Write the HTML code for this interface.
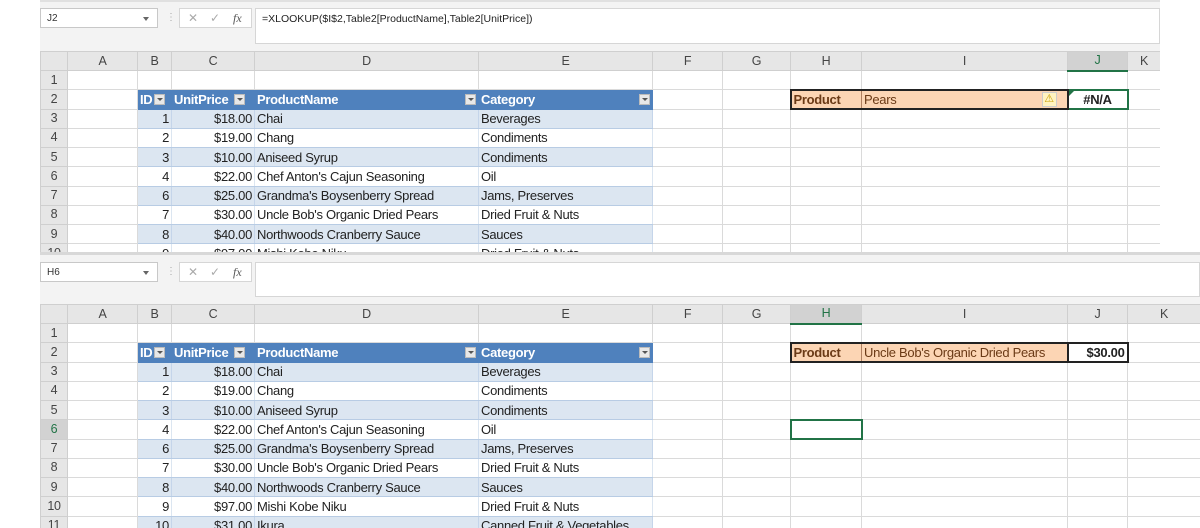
<!DOCTYPE html>
<html><head><meta charset="utf-8">
<style>
*{margin:0;padding:0;box-sizing:border-box}
body{width:1200px;height:528px;background:#fff;position:relative;overflow:hidden;font-family:"Liberation Sans",sans-serif;color:#222}
.panel{position:absolute;left:40px;background:#f3f3f3;overflow:hidden}
.nb{position:absolute;left:0;width:118px;height:20px;background:#fff;border:1px solid #c8c8c8;font-size:10px;padding:4px 0 0 6px;color:#333}
.nb:after{content:"";position:absolute;right:8px;top:8px;border-left:3px solid transparent;border-right:3px solid transparent;border-top:4px solid #666}
.dots{position:absolute;left:126px;color:#aaa;font-size:10px}
.ic{position:absolute;left:139px;width:73px;height:20px;background:#fff;border:1px solid #d6d6d6;font-size:12px;color:#aaa}
.ic span{position:absolute;top:2px}
.fb{position:absolute;left:215px;right:0;background:#fff;border:1px solid #d6d6d6;font-size:10.5px;padding:4px 0 0 6px;color:#222}
table{position:absolute;left:0;border-collapse:collapse;table-layout:fixed;background:#fff}
td{height:19.25px;border:1px solid #dadada;font-size:13px;letter-spacing:-0.3px;white-space:nowrap;overflow:hidden;padding:0 2px;line-height:17px}
tr.h td{background:#e6e6e6;text-align:center;color:#444;border-color:#cfcfcf;font-size:12.5px;height:19px}
td.rh{background:#e6e6e6;text-align:center;color:#444;border-color:#cfcfcf;font-size:12.5px}
.th{background:#4f81bd;color:#fff;font-weight:bold;border-color:#4f81bd;position:relative}
.dd{display:inline-block;width:11px;height:11px;background:#e8e8e8;border:1px solid #bbb;vertical-align:-1px;position:relative;margin-left:2px}
.dd:after{content:"";position:absolute;left:2px;top:3px;border-left:3px solid transparent;border-right:3px solid transparent;border-top:3px solid #555}
.bl td.t{background:#dce6f1;border-color:#dce6f1 #c5d5ea}
.wh td.t{background:#fff;border-color:#fff #dce6f1}
.bl td.t,.wh td.t{border-top:1px solid #b8cce4;border-bottom:1px solid #b8cce4}
.r{text-align:right}
.or{background:#fcd5b4 !important;color:#6b3a16}
.sel{background:#d2d2d2 !important;border-bottom:2px solid #217346 !important;color:#217346 !important}
</style></head><body>

<!-- TOP PANEL -->
<div class="panel" style="top:0;width:1120px;height:253px">
  <div style="position:absolute;left:0;right:0;top:0;height:2px;background:#e0e0e0"></div>
  <div class="nb" style="top:8px">J2</div>
  <div class="dots" style="top:12px">⋮</div>
  <div class="ic" style="top:8px"><span style="left:8px">✕</span><span style="left:30px">✓</span><span style="left:53px;color:#555;font-style:italic;font-family:'Liberation Serif',serif">fx</span></div>
  <div class="fb" style="top:8px;height:36px">=XLOOKUP($I$2,Table2[ProductName],Table2[UnitPrice])</div>
  <table style="top:51px;width:1120px">
  <colgroup><col style="width:27px"><col style="width:70px"><col style="width:34px"><col style="width:83px"><col style="width:224px"><col style="width:174px"><col style="width:70px"><col style="width:68px"><col style="width:71px"><col style="width:206px"><col style="width:60px"><col style="width:33px"></colgroup>
  <tr class="h"><td></td><td>A</td><td>B</td><td>C</td><td>D</td><td>E</td><td>F</td><td style="border-left:1px dashed #999">G</td><td>H</td><td>I</td><td class="sel">J</td><td>K</td></tr>
  <tr><td class="rh">1</td><td></td><td></td><td></td><td></td><td></td><td></td><td style="border-left:1px dashed #999"></td><td></td><td></td><td></td><td></td></tr>
  <tr><td class="rh">2</td><td></td><td class="th">ID<span class="dd"></span></td><td class="th">UnitPrice <span class="dd"></span></td><td class="th">ProductName<span class="dd" style="position:absolute;right:2px;top:4px"></span></td><td class="th">Category<span class="dd" style="position:absolute;right:2px;top:4px"></span></td><td></td><td style="border-left:1px dashed #999"></td><td class="or" style="font-weight:bold;border:2px solid #222;border-right:1px solid #b08060">Product</td><td class="or" style="border:2px solid #222;border-left:none;position:relative">Pears<span style="position:absolute;right:10px;top:1px;font-size:11px;color:#c8a000;background:#fff3c0;border:1px solid #ccc;width:15px;height:15px;text-align:center;line-height:13px">⚠</span></td><td style="text-align:center;font-weight:bold;border:2px solid #217346;position:relative">#N/A<span style="position:absolute;left:0;top:0;border-top:5px solid #217346;border-right:5px solid transparent"></span></td><td></td></tr>
  <tr class="bl"><td class="rh">3</td><td></td><td class="t r">1</td><td class="t r">$18.00</td><td class="t">Chai</td><td class="t">Beverages</td><td></td><td style="border-left:1px dashed #999"></td><td></td><td></td><td></td><td></td></tr>
  <tr class="wh"><td class="rh">4</td><td></td><td class="t r">2</td><td class="t r">$19.00</td><td class="t">Chang</td><td class="t">Condiments</td><td></td><td style="border-left:1px dashed #999"></td><td></td><td></td><td></td><td></td></tr>
  <tr class="bl"><td class="rh">5</td><td></td><td class="t r">3</td><td class="t r">$10.00</td><td class="t">Aniseed Syrup</td><td class="t">Condiments</td><td></td><td style="border-left:1px dashed #999"></td><td></td><td></td><td></td><td></td></tr>
  <tr class="wh"><td class="rh">6</td><td></td><td class="t r">4</td><td class="t r">$22.00</td><td class="t">Chef Anton's Cajun Seasoning</td><td class="t">Oil</td><td></td><td style="border-left:1px dashed #999"></td><td></td><td></td><td></td><td></td></tr>
  <tr class="bl"><td class="rh">7</td><td></td><td class="t r">6</td><td class="t r">$25.00</td><td class="t">Grandma's Boysenberry Spread</td><td class="t">Jams, Preserves</td><td></td><td style="border-left:1px dashed #999"></td><td></td><td></td><td></td><td></td></tr>
  <tr class="wh"><td class="rh">8</td><td></td><td class="t r">7</td><td class="t r">$30.00</td><td class="t">Uncle Bob's Organic Dried Pears</td><td class="t">Dried Fruit &amp; Nuts</td><td></td><td style="border-left:1px dashed #999"></td><td></td><td></td><td></td><td></td></tr>
  <tr class="bl"><td class="rh">9</td><td></td><td class="t r">8</td><td class="t r">$40.00</td><td class="t">Northwoods Cranberry Sauce</td><td class="t">Sauces</td><td></td><td style="border-left:1px dashed #999"></td><td></td><td></td><td></td><td></td></tr>
  <tr class="wh"><td class="rh">10</td><td></td><td class="t r">9</td><td class="t r">$97.00</td><td class="t">Mishi Kobe Niku</td><td class="t">Dried Fruit &amp; Nuts</td><td></td><td style="border-left:1px dashed #999"></td><td></td><td></td><td></td><td></td></tr>
  </table>
</div>
<div style="position:absolute;left:40px;top:252px;width:1160px;height:3px;background:#d8d8d8"></div>

<!-- BOTTOM PANEL -->
<div class="panel" style="top:255px;width:1160px;height:273px">
  <div class="nb" style="top:7px">H6</div>
  <div class="dots" style="top:11px">⋮</div>
  <div class="ic" style="top:7px"><span style="left:8px">✕</span><span style="left:30px">✓</span><span style="left:53px;color:#555;font-style:italic;font-family:'Liberation Serif',serif">fx</span></div>
  <div class="fb" style="top:7px;height:35px"></div>
  <table style="top:49px;width:1160px">
  <colgroup><col style="width:27px"><col style="width:70px"><col style="width:34px"><col style="width:83px"><col style="width:224px"><col style="width:174px"><col style="width:70px"><col style="width:68px"><col style="width:71px"><col style="width:206px"><col style="width:60px"><col style="width:73px"></colgroup>
  <tr class="h"><td></td><td>A</td><td>B</td><td>C</td><td>D</td><td>E</td><td>F</td><td style="border-left:1px dashed #999">G</td><td class="sel">H</td><td>I</td><td>J</td><td>K</td></tr>
  <tr><td class="rh">1</td><td></td><td></td><td></td><td></td><td></td><td></td><td style="border-left:1px dashed #999"></td><td></td><td></td><td></td><td></td></tr>
  <tr><td class="rh">2</td><td></td><td class="th">ID<span class="dd"></span></td><td class="th">UnitPrice <span class="dd"></span></td><td class="th">ProductName<span class="dd" style="position:absolute;right:2px;top:4px"></span></td><td class="th">Category<span class="dd" style="position:absolute;right:2px;top:4px"></span></td><td></td><td style="border-left:1px dashed #999"></td><td class="or" style="font-weight:bold;border:2px solid #222;border-right:1px solid #b08060">Product</td><td class="or" style="border:2px solid #222;border-left:none">Uncle Bob's Organic Dried Pears</td><td class="r" style="font-weight:bold;border:2px solid #222">$30.00</td><td></td></tr>
  <tr class="bl"><td class="rh">3</td><td></td><td class="t r">1</td><td class="t r">$18.00</td><td class="t">Chai</td><td class="t">Beverages</td><td></td><td style="border-left:1px dashed #999"></td><td></td><td></td><td></td><td></td></tr>
  <tr class="wh"><td class="rh">4</td><td></td><td class="t r">2</td><td class="t r">$19.00</td><td class="t">Chang</td><td class="t">Condiments</td><td></td><td style="border-left:1px dashed #999"></td><td></td><td></td><td></td><td></td></tr>
  <tr class="bl"><td class="rh">5</td><td></td><td class="t r">3</td><td class="t r">$10.00</td><td class="t">Aniseed Syrup</td><td class="t">Condiments</td><td></td><td style="border-left:1px dashed #999"></td><td></td><td></td><td></td><td></td></tr>
  <tr class="wh"><td class="rh" style="background:#d2d2d2;color:#217346">6</td><td></td><td class="t r">4</td><td class="t r">$22.00</td><td class="t">Chef Anton's Cajun Seasoning</td><td class="t">Oil</td><td></td><td style="border-left:1px dashed #999"></td><td style="border:2px solid #217346"></td><td></td><td></td><td></td></tr>
  <tr class="bl"><td class="rh">7</td><td></td><td class="t r">6</td><td class="t r">$25.00</td><td class="t">Grandma's Boysenberry Spread</td><td class="t">Jams, Preserves</td><td></td><td style="border-left:1px dashed #999"></td><td></td><td></td><td></td><td></td></tr>
  <tr class="wh"><td class="rh">8</td><td></td><td class="t r">7</td><td class="t r">$30.00</td><td class="t">Uncle Bob's Organic Dried Pears</td><td class="t">Dried Fruit &amp; Nuts</td><td></td><td style="border-left:1px dashed #999"></td><td></td><td></td><td></td><td></td></tr>
  <tr class="bl"><td class="rh">9</td><td></td><td class="t r">8</td><td class="t r">$40.00</td><td class="t">Northwoods Cranberry Sauce</td><td class="t">Sauces</td><td></td><td style="border-left:1px dashed #999"></td><td></td><td></td><td></td><td></td></tr>
  <tr class="wh"><td class="rh">10</td><td></td><td class="t r">9</td><td class="t r">$97.00</td><td class="t">Mishi Kobe Niku</td><td class="t">Dried Fruit &amp; Nuts</td><td></td><td style="border-left:1px dashed #999"></td><td></td><td></td><td></td><td></td></tr>
  <tr class="bl"><td class="rh">11</td><td></td><td class="t r">10</td><td class="t r">$31.00</td><td class="t">Ikura</td><td class="t">Canned Fruit &amp; Vegetables</td><td></td><td style="border-left:1px dashed #999"></td><td></td><td></td><td></td><td></td></tr>
  </table>
</div>
</body></html>
